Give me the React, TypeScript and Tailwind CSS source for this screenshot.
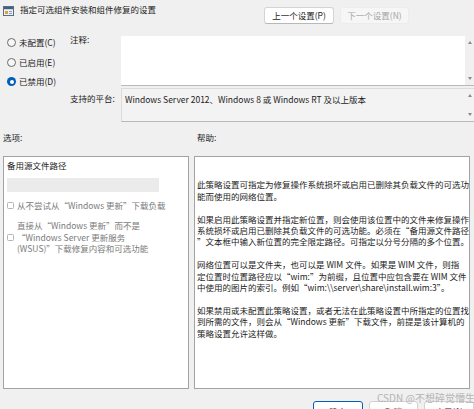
import type { ReactNode } from "react";

const helpParagraphs: string[][] = [
  [
    "此策略设置可指定为修复操作系统损坏或启用已删除其负载文件的可选功",
    "能而使用的网络位置。",
  ],
  [
    "如果启用此策略设置并指定新位置，则会使用该位置中的文件来修复操作",
    "系统损坏或启用已删除其负载文件的可选功能。必须在“备用源文件路径",
    "”文本框中输入新位置的完全限定路径。可指定以分号分隔的多个位置。",
  ],
  [
    "网络位置可以是文件夹，也可以是 WIM 文件。如果是 WIM 文件，则指",
    "定位置时位置路径应以“wim:”为前缀，且位置中应包含要在 WIM 文件",
    "中使用的图片的索引。例如“wim:\\\\server\\share\\install.wim:3”。",
  ],
  [
    "如果禁用或未配置此策略设置，或者无法在此策略设置中所指定的位置找",
    "到所需的文件，则会从“Windows 更新”下载文件，前提是该计算机的",
    "策略设置允许这样做。",
  ],
];

const PolicyIcon = () => (
  <svg width="11" height="10" viewBox="0 0 11 10" className="shrink-0">
    <rect x="0.5" y="0.5" width="10" height="9" fill="#eef2f7" stroke="#5b6d84" />
    <rect x="1" y="1" width="9" height="2.2" fill="#3f5f88" />
    <rect x="2" y="5" width="3" height="3" fill="#e2a22e" />
    <rect x="6" y="5" width="3" height="1" fill="#8a9bb0" />
    <rect x="6" y="7" width="3" height="1" fill="#8a9bb0" />
  </svg>
);

const Radio = ({ label, checked }: { label: string; checked?: boolean }) => (
  <div className="flex h-[19.5px] items-center gap-[2px]">
    {checked ? (
      <span className="flex h-[9px] w-[9px] items-center justify-center rounded-full bg-[#005fb8]">
        <span className="h-[4px] w-[4px] rounded-full bg-white" />
      </span>
    ) : (
      <span className="h-[9px] w-[9px] rounded-full border border-[#6a6a6a] bg-[#f7f7f7]" />
    )}
    <span className="ml-[1px]">{label}</span>
  </div>
);

const ScrollArrows = () => (
  <div className="flex w-[9px] flex-col items-center justify-between py-[5px]">
    <svg width="4" height="3" viewBox="0 0 4 3">
      <path d="M0 3 L2 0 L4 3 Z" fill="#8a8a8a" />
    </svg>
    <svg width="4" height="3" viewBox="0 0 4 3">
      <path d="M0 0 L4 0 L2 3 Z" fill="#8a8a8a" />
    </svg>
  </div>
);

const CheckRow = ({ children }: { children: ReactNode }) => (
  <div className="flex items-center gap-[3px] text-[#7a7a7a]">
    <span className="h-[7px] w-[7px] shrink-0 rounded-[1.5px] border border-[#b5b5b5] bg-white" />
    <div className="whitespace-nowrap">{children}</div>
  </div>
);

const DialogButton = ({ label, primary }: { label: string; primary?: boolean }) => (
  <div
    className={`flex h-[21px] w-[52px] items-center justify-center rounded-[3px] bg-white ${
      primary ? "border-[1.5px] border-[#005fb8]" : "border border-[#d2d2d2]"
    }`}
  >
    {label}
  </div>
);

export default function App() {
  return (
    <div className="relative h-[409px] w-[474px] overflow-hidden bg-[#f0f0f0] font-['Noto_Sans_CJK_SC',sans-serif] text-[8.5px] leading-[11.4px] text-[#1b1b1b]">
      {/* title row */}
      <div className="flex h-[30px]">
        <div className="flex w-[264px] items-start gap-[6px] pl-[3px] pt-[4px]">
          <div className="mt-[2px]">
            <PolicyIcon />
          </div>
          <span>指定可选组件安装和组件修复的设置</span>
        </div>
        <div className="mt-[7px] flex gap-[6px]">
          <div className="flex h-[17px] w-[70px] items-center justify-center rounded-[3px] border border-[#d4d4d4] border-b-[#b8b8b8] bg-white">
            上一个设置(P)
          </div>
          <div className="flex h-[17px] w-[69px] items-center justify-center rounded-[3px] border border-[#ececec] bg-[#f6f6f6] text-[#a5a5a5]">
            下一个设置(N)
          </div>
        </div>
      </div>

      {/* state + comment + platform */}
      <div className="flex">
        <div className="flex w-[70px] flex-col pl-[7px] pt-[3px]">
          <Radio label="未配置(C)" />
          <Radio label="已启用(E)" />
          <Radio label="已禁用(D)" checked />
        </div>
        <div className="flex flex-1 flex-col pt-[4px]">
          <div className="flex">
            <span className="w-[51px]">注释:</span>
            <div className="mt-[2px] flex h-[50px] flex-1 border-b border-[#b9b9b9]">
              <div className="flex-1 bg-white" />
              <ScrollArrows />
            </div>
          </div>
          <div className="mt-[2px] flex">
            <span className="w-[51px] pt-[5px]">支持的平台:</span>
            <div className="flex h-[34px] flex-1 border-y border-l border-[#dcdcdc] border-b-[#b9b9b9] bg-[#f3f3f3]">
              <div className="flex-1 pl-[3px] pt-[5px] whitespace-nowrap">
                Windows Server 2012、Windows 8 或 Windows RT 及以上版本
              </div>
              <ScrollArrows />
            </div>
          </div>
        </div>
      </div>

      {/* section labels */}
      <div className="mt-[10px] flex">
        <span className="w-[194px] pl-[3px]">选项:</span>
        <span className="pl-[3px]">帮助:</span>
      </div>

      {/* panels */}
      <div className="mt-[13px] flex gap-[5px] pl-[3px]">
        <div className="h-[233px] w-[186px] border border-[#a3a3a3] bg-white px-[3px] pt-[3px]">
          <div>备用源文件路径</div>
          <div className="mt-[6px] h-[14px] w-[152px] bg-[#ebebeb]" />
          <div className="mt-[8px]">
            <CheckRow>从不尝试从“Windows 更新”下载负载</CheckRow>
          </div>
          <div className="mt-[9px]">
            <CheckRow>
              <div>直接从“Windows 更新”而不是</div>
              <div>“Windows Server 更新服务</div>
              <div>(WSUS)”下载修复内容和可选功能</div>
            </CheckRow>
          </div>
        </div>
        <div className="h-[233px] w-[276px] border border-[#a3a3a3] bg-white pl-[2px] pt-[22px]">
          {helpParagraphs.map((lines, i) => (
            <div key={i} className="mb-[11.4px]">
              {lines.map((line) => (
                <div key={line} className="whitespace-nowrap">
                  {line}
                </div>
              ))}
            </div>
          ))}
        </div>
      </div>

      {/* footer buttons */}
      <div className="mt-[12px] flex gap-[6px] pl-[313px]">
        <DialogButton label="确定" primary />
        <DialogButton label="取消" />
        <DialogButton label="应用(A)" />
      </div>

      {/* watermark */}
      <div className="absolute left-[377px] top-[392px] whitespace-nowrap text-[10px] leading-[12px] text-[#b4b4b4]">
        CSDN @不想碎觉懵生
      </div>
    </div>
  );
}
